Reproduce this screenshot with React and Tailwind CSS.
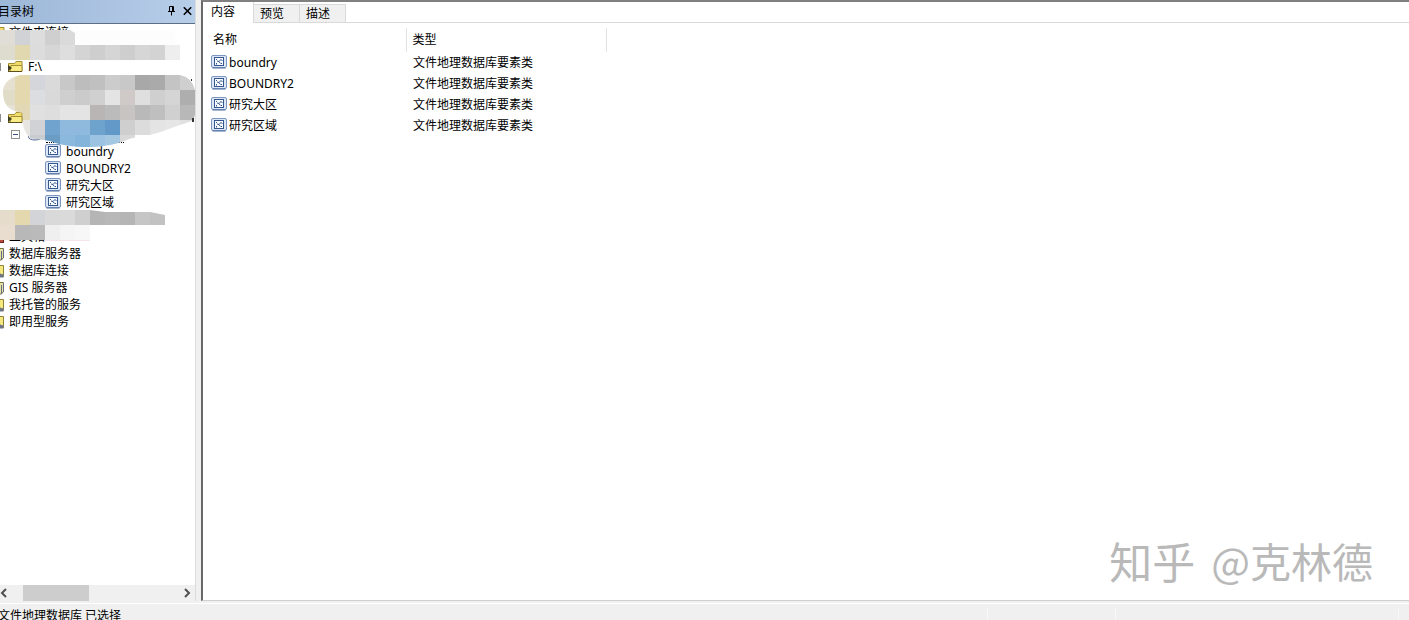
import { useState } from 'react'

const tabs = ['内容', '预览', '描述']

const features = [
  { name: 'boundry', type: '文件地理数据库要素类' },
  { name: 'BOUNDRY2', type: '文件地理数据库要素类' },
  { name: '研究大区', type: '文件地理数据库要素类' },
  { name: '研究区域', type: '文件地理数据库要素类' },
]

const rootItems = [
  { label: '工具箱', icon: 'toolbox' },
  { label: '数据库服务器', icon: 'server' },
  { label: '数据库连接', icon: 'folder' },
  { label: 'GIS 服务器', icon: 'server' },
  { label: '我托管的服务', icon: 'folder' },
  { label: '即用型服务', icon: 'folder' },
]

// 15px tiles, each row is [x, y, colours]
const topTiles = [
  [0, 30, ['#e0ddd6', '#d0d2d6', '#dddddd', '#cfcfcf', '#dadada']],
  [0, 45, ['#dedbcf', '#e2d8b0', '#dcdcdc', '#d6d6d6', '#dedede', '#d4d4d4', '#cecece', '#d5d5d5', '#cecece', '#d6d6d6', '#d3d3d3', '#eeeeee']],
]

const middleTiles = [
  [0, 75, ['#e5e0d0', '#e4d9ae', '#d4d6db', '#dadada', '#c8c8c8', '#bdbdbd', '#c0c0c0', '#cccccc', '#c8c8c8', '#a8a8a8', '#aaaaaa', '#c4c4c4', '#cfcfcf', '#cfcfcf']],
  [0, 90, ['#e0dcc8', '#e3d8ae', '#dcdde0', '#d9d9d9', '#cfcfcf', '#cbcbcb', '#d0d0d0', '#e4e4e4', '#cfcac8', '#dfdfdf', '#cfcfcf', '#d5d5d5', '#aeaeae', '#d8d8d8']],
  [0, 105, ['#e6e2d6', '#e3d8b5', '#e0e0e0', '#dedede', '#e4e4e4', '#e4e4e4', '#b8b5b4', '#bbbbbb', '#c8c4c2', '#b9b9b9', '#bfbfbf', '#d0d0d0', '#b8b8b8', '#d8d8d8']],
  [15, 120, ['#e8e6e0', '#d0d2d6', '#71a3cf', '#8fbadd', '#8fbadd', '#6ea3cd', '#6299c8', '#cfcfcf', '#dcdcdc', '#e4e4e4', '#e6e6e6', '#e0e0e0']],
  [15, 135, ['#e8e8e8', '#c8ccd0', '#6b9cc4', '#8bb8dd', '#85b4da', '#9cc4e2', '#a4c8e2', '#d9d9d9']],
]

const bottomTiles = [
  [0, 210, ['#e5dccb', '#e4d9ae', '#d2d4d8', '#d9d9d9', '#dadada', '#cfcfcf', '#b5b5b5', '#b8b8b8', '#b5b5b5', '#c6c6c6', '#c2c2c2']],
  [0, 225, ['#e9ddd0', '#b8b8b8', '#bababa', '#efefef', '#f5f5f5', '#f7f7f7']],
]

export default function App() {
  const [tab, setTab] = useState('内容')

  return (
    <div className="flex h-screen flex-col overflow-hidden bg-[#f0f0f0] text-xs text-black font-['Noto_Sans','Noto_Sans_CJK_SC',sans-serif]">
      <div className="flex min-h-0 flex-1 gap-[5px]">
        <CatalogTree />

        <main className="relative flex min-w-0 flex-1 flex-col border-t-2 border-l-2 border-b border-t-[#808080] border-l-[#696969] border-b-[#cfcfcf] bg-white">
          <TabStrip value={tab} onChange={setTab} />
          <ContentTable />
          <Watermark />
        </main>
      </div>

      <footer className="mt-0.5 flex h-[17px] shrink-0 border-t border-white leading-4">
        <span className="-ml-0.5 flex-1 whitespace-nowrap pt-1">文件地理数据库 已选择</span>
        <span className="mt-1 w-32 border-l border-[#f8f8f8]" />
        <span className="mt-1 w-[284px] border-x border-[#f8f8f8]" />
        <span className="w-2.5" />
      </footer>
    </div>
  )
}

function CatalogTree() {
  return (
    <aside className="flex w-[196px] shrink-0 flex-col border-r border-[#dcdcdc] bg-white">
      <header className="flex h-6 shrink-0 items-center border-b border-[#5d6f86] bg-linear-to-r from-[#9db7d8] to-[#b7cee9]">
        <h2 className="-ml-0.5 flex-1">目录树</h2>
        <button type="button" aria-label="固定" className="flex size-4 items-center justify-center">
          <svg width="9" height="11" viewBox="0 0 9 11" fill="none" stroke="#000">
            <path d="M2.5 5V.5h4V5M1 5.500h7M4.500 6v3.500M5.500.5V5" />
          </svg>
        </button>
        <button type="button" aria-label="关闭" className="flex size-4 items-center justify-center">
          <svg width="9" height="9" viewBox="0 0 9 9" fill="none" stroke="#000" strokeWidth="1.6">
            <path d="M.8.3l7.4 7.4M8.2.3L.8 7.7" />
          </svg>
        </button>
      </header>

      <div className="relative flex-1 overflow-hidden">
        <ul className="whitespace-nowrap leading-[17px]">
          <li className="flex h-[17px] items-center gap-1">
            <FolderIcon className="-ml-[11px]" />
            文件夹连接
          </li>
          <li className="h-[17px]" />
          <li className="flex h-[17px] items-center gap-[5px]">
            <span className="h-2 w-1 border-r border-[#8c8c8c] -ml-[3px]" />
            <FolderIcon className="ml-px" />
            <span>F:\</span>
          </li>
          <li className="h-[34px]" />
          <li className="flex h-[17px] items-center gap-[5px]">
            <span className="h-2 w-1 border-r border-[#8c8c8c] -ml-[3px]" />
            <FolderIcon className="ml-px" />
          </li>
          <li className="flex h-[17px] items-center gap-2 pl-[11px]">
            <button type="button" aria-label="折叠" className="flex size-[9px] items-center justify-center border border-[#919191] bg-white">
              <span className="h-px w-[5px] bg-[#3d4f8a]" />
            </button>
            <DatabaseIcon />
            <span className="-ml-1 h-4 w-[78px] border-b border-dotted border-black" />
          </li>
          {features.map((item) => (
            <li key={item.name} className="flex h-[17px] items-center gap-[5px] pl-[45px]">
              <FeatureIcon />
              <span>{item.name}</span>
            </li>
          ))}
          <li className="h-[17px]" />
          {rootItems.map((item) => (
            <li key={item.label} className="flex h-[17px] items-center gap-1">
              <RootIcon type={item.icon} />
              <span>{item.label}</span>
            </li>
          ))}
        </ul>
        <Mosaic />
      </div>

      <div className="flex h-4 shrink-0 items-center bg-[#f0f0f0]">
        <button type="button" aria-label="向左滚动" className="flex h-4 w-4 items-center">
          <Arrow d="M6 1L2 5l4 4" />
        </button>
        <div className="flex h-4 flex-1 pl-[7px]">
          <div className="h-full w-[66px] bg-[#cdcdcd]" />
        </div>
        <button type="button" aria-label="向右滚动" className="flex h-4 w-4 items-center justify-center">
          <Arrow d="M2 1l4 4-4 4" />
        </button>
      </div>
    </aside>
  )
}

function TabStrip({ value, onChange }) {
  return (
    <div role="tablist" className="flex h-[21px] shrink-0 items-end">
      {tabs.map((name) => (
        <button
          type="button"
          role="tab"
          key={name}
          aria-selected={name === value}
          onClick={() => onChange(name)}
          className={
            name === value
              ? 'h-full w-[51px] border-r border-[#d9d9d9] bg-white pb-0.5 pl-2 text-left leading-4'
              : 'h-[19px] w-[46px] border-t border-r border-b border-[#d9d9d9] bg-[#f0f0f0] pl-1.5 text-left leading-4'
          }
        >
          {name}
        </button>
      ))}
      <div className="h-full flex-1 border-b border-[#d9d9d9]" />
    </div>
  )
}

function ContentTable() {
  return (
    <table className="mt-[5px] w-[403px] table-fixed text-left">
      <thead>
        <tr className="h-6">
          <th className="w-[203px] border-r border-[#e2e2e2] pl-2.5 font-normal">名称</th>
          <th className="w-[200px] border-r border-[#e2e2e2] pl-1.5 font-normal">类型</th>
        </tr>
      </thead>
      <tbody>
        {features.map((item) => (
          <tr key={item.name} className="h-[21px]">
            <td className="pl-2">
              <div className="flex items-center gap-0.5">
                <FeatureIcon />
                <span>{item.name}</span>
              </div>
            </td>
            <td className="pl-[7px]">{item.type}</td>
          </tr>
        ))}
      </tbody>
    </table>
  )
}

function Watermark() {
  return (
    <div className="pointer-events-none absolute right-9 bottom-2.5 flex items-center gap-4 whitespace-nowrap text-[#b9b9b9] font-['Noto_Sans_CJK_SC',sans-serif]">
      <span className="text-[43px] leading-[60px]">知乎</span>
      <span className="text-[41px] leading-[60px]">@克林德</span>
    </div>
  )
}

function FeatureIcon() {
  return (
    <svg width="16" height="16" viewBox="0 0 16 16" fill="none" className="shrink-0">
      <rect x=".5" y=".5" width="15" height="12" rx="1.5" fill="#dbe7f6" stroke="#7d96bf" />
      <path d="M1.500 13h13" stroke="#4d6ca3" />
      <rect x="3.500" y="2.500" width="9" height="8" fill="#f8fbff" stroke="#35568f" />
      <path d="M5 4.500h1M10.500 4L8 6.500M6 6l2 .5 1 1.500M5.500 8v1.500M9.500 8.500h1.500M11 5v1" stroke="#35568f" />
    </svg>
  )
}

function FolderIcon({ className }) {
  return (
    <svg width="16" height="16" viewBox="0 0 16 16" className={`shrink-0 ${className}`}>
      <path d="M1.500 12V4.500h6l1.500-2h6V12z" fill="#f0dc6a" stroke="#a48d35" />
      <path d="M4 6.500h11v6H3z" fill="#f8ea85" stroke="#a48d35" />
      <path d="M1 6l4 3-4 3z" fill="#3c3c20" />
      <path d="M1 12.500h14" stroke="#5e501c" />
    </svg>
  )
}

function DatabaseIcon() {
  return (
    <svg width="14" height="14" viewBox="0 0 14 14" className="shrink-0">
      <path d="M.5 2v7c0 4 13 4 13 0V2" fill="#e4e8ee" stroke="#5c6f98" />
      <ellipse cx="7" cy="3" rx="6.500" ry="2.500" fill="#f5f7fa" stroke="#5c6f98" />
    </svg>
  )
}

function RootIcon({ type }) {
  if (type === 'toolbox') {
    return (
      <svg width="16" height="14" viewBox="0 0 16 14" className="-ml-[11px] shrink-0">
        <rect x="1.500" y="4.500" width="13" height="8" fill="#b9473d" stroke="#6d2620" />
      </svg>
    )
  }
  return (
    <svg width="16" height="14" viewBox="0 0 16 14" className="-ml-[11px] shrink-0">
      {type === 'server' ? (
        <>
          <path d="M5.500 1.500h9v9l-2 2.500h-7z" fill="#e6e2a4" stroke="#77753f" />
          <path d="M12.500 4v9M14.500 2v9" stroke="#666c84" />
        </>
      ) : (
        <>
          <path d="M5.500 1.500h9v11h-9z" fill="#f6e87c" stroke="#8f823b" />
          <path d="M10 8.500l3 2 1.500-1v4H10z" fill="#6d7485" />
        </>
      )}
    </svg>
  )
}

function Arrow({ d }) {
  return (
    <svg width="8" height="10" viewBox="0 0 8 10" fill="none" stroke="#505050" strokeWidth="2">
      <path d={d} />
    </svg>
  )
}

function Tiles({ rows, clip }) {
  return (
    <g clipPath={`url(#${clip})`}>
      {rows.map(([x, y, colors]) =>
        colors.map((color, i) => (
          <rect key={`${x + i * 15}-${y}`} x={x + i * 15} y={y} width="15" height="15" fill={color} />
        ))
      )}
    </g>
  )
}

// Pixelated patches painted over the private entries
function Mosaic() {
  return (
    <svg
      aria-hidden="true"
      width="196"
      height="220"
      viewBox="0 24 196 220"
      shapeRendering="crispEdges"
      className="pointer-events-none absolute top-0 left-0"
    >
      <clipPath id="patch-top">
        <path d="M0 30h70l5 3v12h105v15H0z" />
      </clipPath>
      <clipPath id="patch-middle">
        <path d="M20 75H180Q195 78 196 97T192 121C172 127 152 137 132 138L124 141C104 149 70 149 50 141L30 138Q24 132 23 124V113C8 111 3 104 3 91Q4 79 20 75z" />
      </clipPath>
      <clipPath id="patch-bottom">
        <path d="M0 210h90l15 2h45l15 3v10H90v15H0z" />
      </clipPath>
      <path d="M75 31h100v14H75zM0 60h140v1H0z" fill="#fdfdfd" />
      <Tiles rows={topTiles} clip="patch-top" />
      <Tiles rows={middleTiles} clip="patch-middle" />
      <Tiles rows={bottomTiles} clip="patch-bottom" />
      <path d="M45 240h45v1H45z" fill="#f5e4e8" />
      <path d="M191 79h1v2h-1zM192 118h2v4h-2z" fill="#333" />
    </svg>
  )
}
